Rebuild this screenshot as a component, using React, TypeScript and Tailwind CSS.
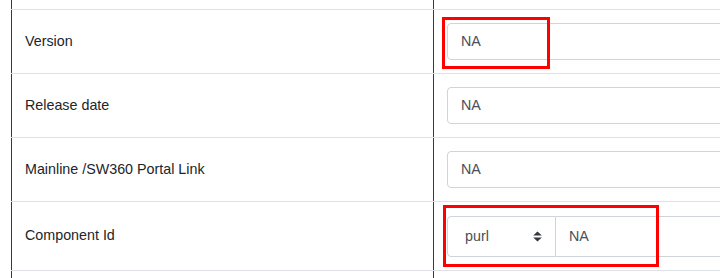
import React from "react";

function Arrow() {
  return (
    <svg width="9" height="11" viewBox="0 0 9 11" className="block">
      <path d="M4.5 0.5 L8.8 4.6 L0.2 4.6 Z" fill="#343a40" />
      <path d="M4.5 10.5 L8.8 6.4 L0.2 6.4 Z" fill="#343a40" />
    </svg>
  );
}

function Row({ label, value, last }: { label: string; value?: string; last?: boolean }) {
  return (
    <div className="flex border-t border-[#dee2e6]">
      <div className="w-[422px] shrink-0 border-l border-[#343a40] pl-[13px] flex items-center text-[14.3px] text-[#212529]">
        {label}
      </div>
      <div
        className={
          "w-[600px] shrink-0 border-l border-[#343a40] pl-[13px] " +
          (last ? "pt-[14px] pb-[13px]" : "py-[13px]")
        }
      >
        {last ? (
          <div className="flex h-[41px]">
            <div className="w-[109px] shrink-0 border border-[#ced4da] rounded-l-[4px] flex items-center justify-between pl-[17px] pr-[13px] text-[14.3px] text-[#495057]">
              <span>purl</span>
              <Arrow />
            </div>
            <div className="flex-1 border border-l-0 border-[#ced4da] flex items-center pl-[13px] text-[14.3px] text-[#495057]">
              {value}
            </div>
          </div>
        ) : (
          <div className="h-[37px] border border-[#ced4da] rounded-[4px] flex items-center pl-[13px] text-[14.3px] text-[#495057]">
            {value}
          </div>
        )}
      </div>
    </div>
  );
}

export default function App() {
  return (
    <div
      className="relative w-[720px] h-[278px] overflow-hidden bg-white"
      style={{ fontFamily: '"Liberation Sans", Arial, sans-serif' }}
    >
      <div className="ml-[11px] w-[1100px]">
        <div className="flex h-[9px]">
          <div className="w-[422px] shrink-0 border-l border-[#343a40]" />
          <div className="w-[600px] shrink-0 border-l border-[#343a40]" />
        </div>
        <Row label="Version" value="NA" />
        <Row label="Release date" value="NA" />
        <Row label="Mainline /SW360 Portal Link" value="NA" />
        <Row label="Component Id" value="NA" last />
        <div className="flex h-[8px] border-t border-[#dee2e6]">
          <div className="w-[422px] shrink-0 border-l border-[#343a40]" />
          <div className="w-[600px] shrink-0 border-l border-[#343a40]" />
        </div>
      </div>
      <div className="absolute left-[442px] top-[17px] w-[108px] h-[52px] border-[3px] border-[#ff0000]" />
      <div className="absolute left-[443px] top-[205px] w-[216px] h-[62px] border-[3px] border-[#ff0000]" />
    </div>
  );
}
